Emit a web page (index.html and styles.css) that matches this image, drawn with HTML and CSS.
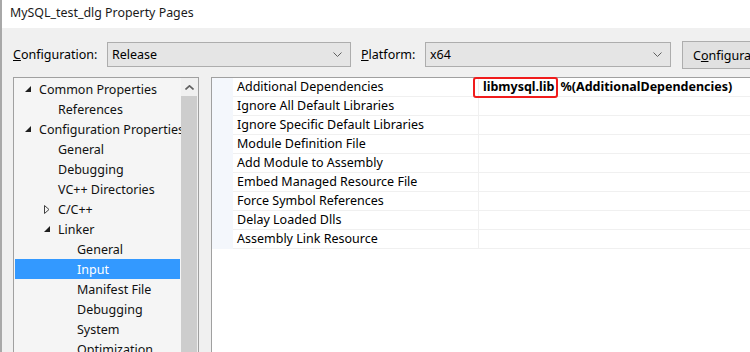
FILE: index.html
```html
<!DOCTYPE html>
<html lang="en">
<head>
    <meta charset="UTF-8">
    <meta name="viewport" content="width=device-width, initial-scale=1.0">
    <title>MySQL_test_dlg Property Pages</title>
    <link rel="stylesheet" href="styles.css">
</head>
<body>
    <!-- Dialog window -->
    <div class="window">
        <!-- Title bar -->
        <div class="title-bar">MySQL_test_dlg Property Pages</div>

        <!-- Configuration / Platform selectors -->
        <div class="toolbar">
            <label class="label-config"><u>C</u>onfiguration:</label>
            <div class="combo combo-config">
                <span>Release</span>
                <svg class="chevron" width="9" height="5" viewBox="0 0 9 5"><polyline points="0.5,0.5 4.5,4.5 8.5,0.5" fill="none" stroke="#606060" stroke-width="1"/></svg>
            </div>
            <label class="label-platform"><u>P</u>latform:</label>
            <div class="combo combo-platform">
                <span>x64</span>
                <svg class="chevron" width="9" height="5" viewBox="0 0 9 5"><polyline points="0.5,0.5 4.5,4.5 8.5,0.5" fill="none" stroke="#606060" stroke-width="1"/></svg>
            </div>
            <button type="button" class="config-button">C<u>o</u>nfigura</button>
        </div>

        <!-- Main area: tree on the left, property grid on the right -->
        <div class="main">
            <div class="tree">
                <ul class="tree-list">
                    <li class="level-0"><span class="arrow"><svg width="6" height="6" viewBox="0 0 6 6"><polygon points="6,0 6,6 0,6" fill="#1e1e1e"/></svg></span>Common Properties</li>
                    <li class="level-1"><span class="arrow"></span>References</li>
                    <li class="level-0"><span class="arrow"><svg width="6" height="6" viewBox="0 0 6 6"><polygon points="6,0 6,6 0,6" fill="#1e1e1e"/></svg></span>Configuration Properties</li>
                    <li class="level-1"><span class="arrow"></span>General</li>
                    <li class="level-1"><span class="arrow"></span>Debugging</li>
                    <li class="level-1"><span class="arrow"></span>VC++ Directories</li>
                    <li class="level-1"><span class="arrow"><svg width="6" height="9" viewBox="0 0 6 9"><polygon points="0.5,0.5 5,4.5 0.5,8.5" fill="none" stroke="#404040" stroke-width="1"/></svg></span>C/C++</li>
                    <li class="level-1"><span class="arrow"><svg width="6" height="6" viewBox="0 0 6 6"><polygon points="6,0 6,6 0,6" fill="#1e1e1e"/></svg></span>Linker</li>
                    <li class="level-2"><span class="arrow"></span>General</li>
                    <li class="level-2 selected"><span class="arrow"></span>Input</li>
                    <li class="level-2"><span class="arrow"></span>Manifest File</li>
                    <li class="level-2"><span class="arrow"></span>Debugging</li>
                    <li class="level-2"><span class="arrow"></span>System</li>
                    <li class="level-2"><span class="arrow"></span>Optimization</li>
                </ul>
                <!-- Vertical scrollbar -->
                <div class="scrollbar">
                    <div class="scroll-up">
                        <svg width="9" height="5" viewBox="0 0 9 5"><polyline points="0.5,4.5 4.5,0.8 8.5,4.5" fill="none" stroke="#606060" stroke-width="1.6"/></svg>
                    </div>
                    <div class="scroll-thumb"></div>
                </div>
            </div>

            <!-- Property grid -->
            <div class="grid">
                <div class="grid-row">
                    <div class="strip"></div>
                    <div class="name">Additional Dependencies</div>
                    <div class="value bold"><span class="marked">libmysql.lib</span>%(AdditionalDependencies)</div>
                </div>
                <div class="grid-row">
                    <div class="strip"></div>
                    <div class="name">Ignore All Default Libraries</div>
                    <div class="value"></div>
                </div>
                <div class="grid-row">
                    <div class="strip"></div>
                    <div class="name">Ignore Specific Default Libraries</div>
                    <div class="value"></div>
                </div>
                <div class="grid-row">
                    <div class="strip"></div>
                    <div class="name">Module Definition File</div>
                    <div class="value"></div>
                </div>
                <div class="grid-row">
                    <div class="strip"></div>
                    <div class="name">Add Module to Assembly</div>
                    <div class="value"></div>
                </div>
                <div class="grid-row">
                    <div class="strip"></div>
                    <div class="name">Embed Managed Resource File</div>
                    <div class="value"></div>
                </div>
                <div class="grid-row">
                    <div class="strip"></div>
                    <div class="name">Force Symbol References</div>
                    <div class="value"></div>
                </div>
                <div class="grid-row">
                    <div class="strip"></div>
                    <div class="name">Delay Loaded Dlls</div>
                    <div class="value"></div>
                </div>
                <div class="grid-row">
                    <div class="strip"></div>
                    <div class="name">Assembly Link Resource</div>
                    <div class="value"></div>
                </div>
            </div>
        </div>
    </div>
</body>
</html>
```

FILE: styles.css
```css
/* Page body */
body {
    margin: 0;
    font-family: 'Noto Sans', 'Liberation Sans', sans-serif;
    font-size: 12.5px;
    color: #000;
    background-color: #f0f0f0;
}

/* Dialog window */
.window {
    width: 750px;
    height: 352px;
    overflow: hidden;
    box-sizing: border-box;
    border-left: 2px solid #a8a8a8;
    background-color: #f0f0f0;
}

/* Title bar */
.title-bar {
    height: 28px;
    line-height: 26px;
    padding-left: 8px;
    background-color: #fff;
    font-size: 12.4px;
    color: #1a1a1a;
}

/* Selector row */
.toolbar {
    display: flex;
    align-items: flex-start;
    height: 49px;
    box-sizing: border-box;
    padding: 14px 0 0 11px;
    white-space: nowrap;
}

/* Every item keeps its width, the button is cut at the window edge */
.toolbar > * {
    flex-shrink: 0;
}

.toolbar label {
    line-height: 25px;
}

.label-config {
    width: 94px;
}

.label-platform {
    width: 64px;
    margin-left: 10px;
}

/* Drop-down boxes */
.combo {
    display: flex;
    align-items: center;
    justify-content: space-between;
    height: 25px;
    box-sizing: border-box;
    padding: 0 8px 0 4px;
    border: 1px solid #adadad;
    background-color: #e5e5e5;
}

.combo-config {
    width: 244px;
}

.combo-platform {
    width: 246px;
}

/* Configuration Manager button */
.config-button {
    margin: -1px 0 0 11px;
    height: 28px;
    width: 100px;
    padding: 0 0 0 10px;
    text-align: left;
    border: 1px solid #adadad;
    background-color: #e1e1e1;
    font-family: inherit;
    font-size: 12.5px;
    color: #000;
}

/* Main area */
.main {
    display: flex;
    gap: 12px;
    padding-left: 11px;
}

/* Tree on the left */
.tree {
    display: flex;
    width: 186px;
    height: 300px;
    box-sizing: border-box;
    border: 1px solid #a0a0a0;
    background-color: #f5f5f5;
    flex-shrink: 0;
}

.tree-list {
    list-style: none;
    margin: 0;
    padding: 1px;
    flex: 1;
    overflow: hidden;
}

.tree-list li {
    display: flex;
    align-items: center;
    height: 20px;
    white-space: nowrap;
    color: #111;
}

.arrow {
    display: flex;
    align-items: center;
    width: 19px;
    flex-shrink: 0;
    box-sizing: border-box;
    padding-left: 5px;
}

.level-0 {
    padding-left: 5px;
}

.level-1 {
    padding-left: 24px;
}

.level-2 {
    padding-left: 43px;
}

/* Selected tree item */
.tree-list li.selected {
    background-color: #3399ff;
    color: #fff;
}

/* Scrollbar */
.scrollbar {
    width: 17px;
    flex-shrink: 0;
    background-color: #f0f0f0;
}

.scroll-up {
    display: flex;
    justify-content: center;
    align-items: center;
    height: 18px;
}

.scroll-thumb {
    height: 280px;
    margin-right: 1px;
    background-color: #cdcdcd;
}

/* Property grid */
.grid {
    width: 580px;
    height: 300px;
    box-sizing: border-box;
    border: 1px solid #a0a0a0;
    border-right: none;
    background-color: #fff;
    flex-shrink: 0;
}

.grid-row {
    display: flex;
    height: 19px;
}

.strip {
    width: 21px;
    flex-shrink: 0;
    background-color: #f4f7fc;
}

.name,
.value {
    box-sizing: border-box;
    line-height: 18px;
    border-bottom: 1px solid #f0f0f0;
    padding-left: 4px;
    white-space: nowrap;
}

.name {
    width: 246px;
    border-right: 1px solid #f0f0f0;
}

.value {
    flex: 1;
}

.bold {
    font-weight: bold;
}

/* Red annotation box drawn over the value */
.marked {
    position: relative;
    margin-right: 6px;
}

.marked::before {
    content: '';
    position: absolute;
    left: -10px;
    right: -4px;
    top: -1px;
    bottom: -3px;
    border: 2px solid #f01c1c;
    border-radius: 3px;
}
```
